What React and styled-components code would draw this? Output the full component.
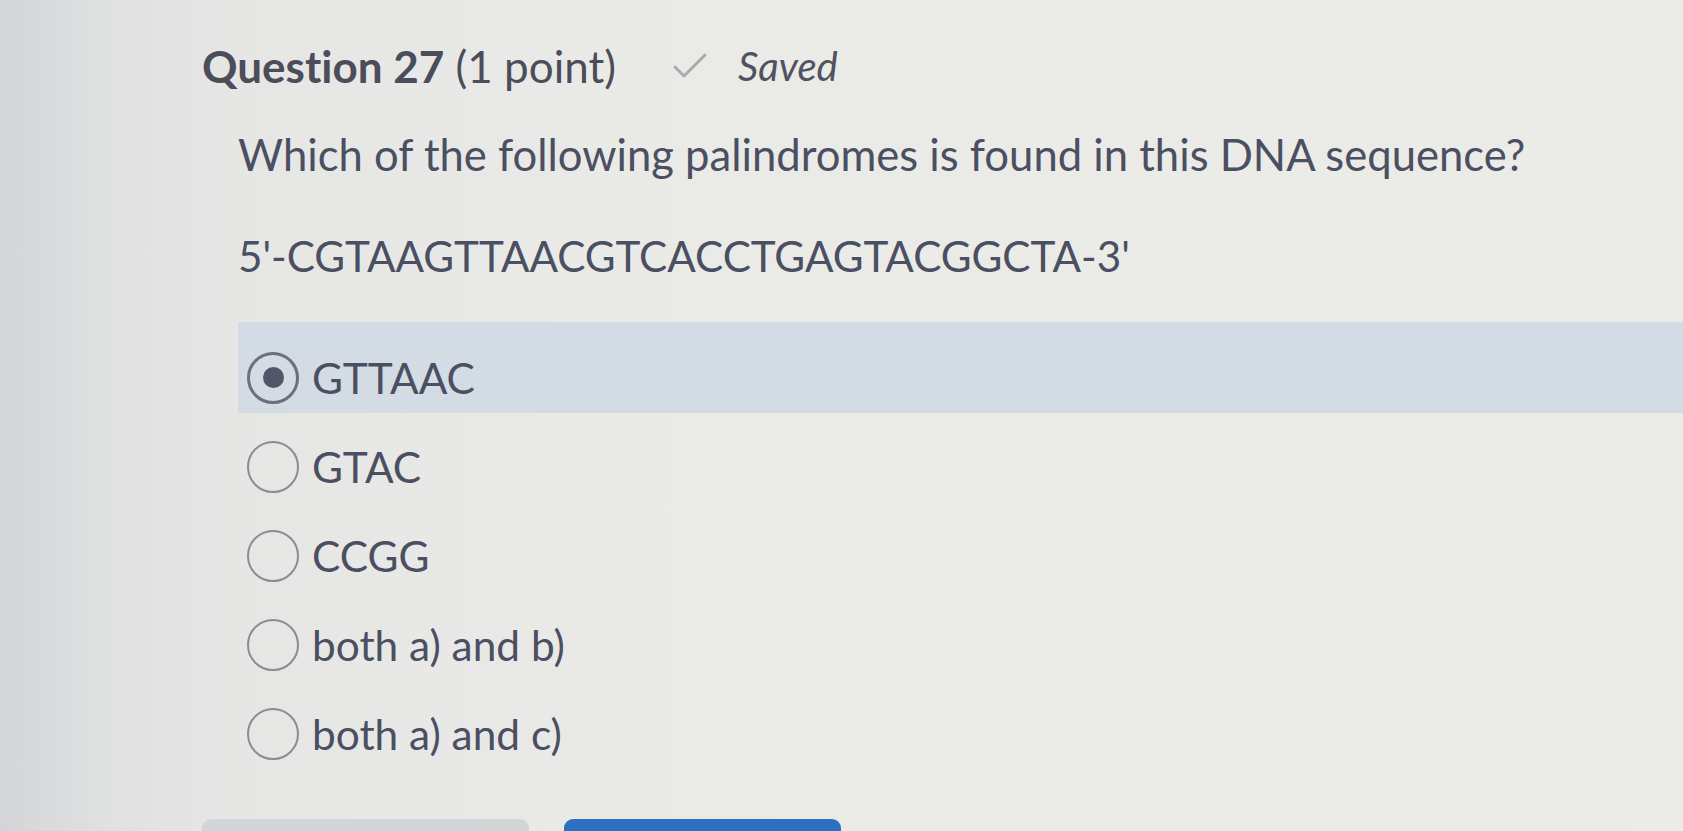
import React from 'react';
import styled, { createGlobalStyle } from 'styled-components';

const GlobalStyle = createGlobalStyle`
  html, body {
    margin: 0;
    padding: 0;
    height: 100%;
    overflow: hidden;
  }
  body {
    font-family: 'Lato', 'Open Sans', sans-serif;
    font-variant-ligatures: none;
    background: #e9e9e6;
  }
`;

const Page = styled.div`
  height: 831px;
  box-sizing: border-box;
  padding: 42px 0 0 202px;
  overflow: hidden;
  background: linear-gradient(90deg, #d3d5d8 0%, #dfe0e0 6%, #e6e7e5 14%, #eaeae7 40%, #ebebe8 100%);
`;

const Header = styled.div`
  display: flex;
  align-items: center;
  height: 48px;
`;

const Title = styled.h1`
  margin: 0;
  font-size: 44px;
  line-height: 48px;
  font-weight: 400;
  color: #4b4d5a;

  strong {
    font-weight: 700;
  }
`;

const SavedStatus = styled.div`
  display: flex;
  align-items: center;
  margin-left: 56px;
  gap: 30px;
  font-size: 40px;
  font-style: italic;
  color: #50535f;
`;

const Body = styled.div`
  padding-left: 36px;
`;

const QuestionText = styled.p`
  margin: 38px 0 0;
  font-size: 43.6px;
  line-height: 52px;
  color: #4b4f62;
`;

const Sequence = styled.p`
  margin: 50px 0 0;
  font-size: 42.2px;
  line-height: 52px;
  color: #4b4f62;
`;

const OptionList = styled.div`
  margin-top: 40px;
  display: flex;
  flex-direction: column;
`;

const OptionRow = styled.div`
  display: flex;
  align-items: center;
  gap: 13px;
  height: ${({ selected }) => (selected ? '91px' : '89px')};
  margin-bottom: ${({ selected }) => (selected ? '-2px' : '0')};
  box-sizing: border-box;
  padding: ${({ selected }) => (selected ? '22px 0 2px 9px' : '22px 0 0 9px')};
  background: ${({ selected }) => (selected ? '#d3dce5' : 'transparent')};
`;

const Radio = styled.span`
  width: 52px;
  height: 52px;
  box-sizing: border-box;
  border-radius: 50%;
  border: ${({ checked }) => (checked ? '3px solid #6c6f7c' : '2px solid #8a8c95')};
  display: flex;
  align-items: center;
  justify-content: center;
  flex-shrink: 0;

  &::after {
    content: '';
    display: ${({ checked }) => (checked ? 'block' : 'none')};
    width: 21px;
    height: 21px;
    border-radius: 50%;
    background: #525666;
  }
`;

const OptionLabel = styled.span`
  font-size: 42.4px;
  line-height: 52px;
  color: #4b4f62;
`;

const Footer = styled.div`
  display: flex;
  gap: 35px;
  margin-top: 52px;
`;

const Button = styled.button`
  width: ${({ wide }) => (wide ? '327px' : '277px')};
  height: 44px;
  border: none;
  border-radius: 9px;
  background: ${({ primary }) => (primary ? '#2f6fc2' : '#d3d6d9')};
`;

const options = [
  { label: 'GTTAAC', checked: true },
  { label: 'GTAC', checked: false },
  { label: 'CCGG', checked: false },
  { label: 'both a) and b)', checked: false },
  { label: 'both a) and c)', checked: false }
];

const CheckIcon = () => (
  <svg width="36" height="28" viewBox="0 0 36 28" fill="none">
    <path d="M3 15 L12 24 L33 3" stroke="#a9abb1" strokeWidth="3" strokeLinecap="round" strokeLinejoin="round" />
  </svg>
);

const App = () => (
  <Page>
    <GlobalStyle />
    <Header>
      <Title>
        <strong>Question 27</strong> (1 point)
      </Title>
      <SavedStatus>
        <CheckIcon />
        <span>Saved</span>
      </SavedStatus>
    </Header>
    <Body>
      <QuestionText>Which of the following palindromes is found in this DNA sequence?</QuestionText>
      <Sequence>5'-CGTAAGTTAACGTCACCTGAGTACGGCTA-3'</Sequence>
      <OptionList>
        {options.map((opt) => (
          <OptionRow key={opt.label} selected={opt.checked}>
            <Radio checked={opt.checked} />
            <OptionLabel>{opt.label}</OptionLabel>
          </OptionRow>
        ))}
      </OptionList>
    </Body>
    <Footer>
      <Button wide />
      <Button primary />
    </Footer>
  </Page>
);

export default App;
